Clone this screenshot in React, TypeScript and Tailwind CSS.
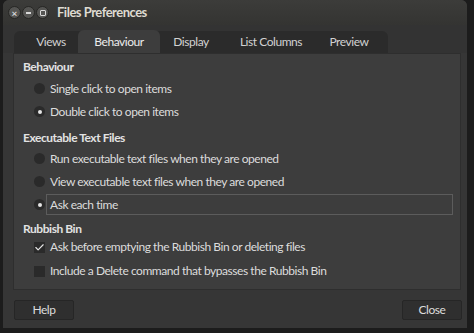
import { Check } from "lucide-react";

function Radio({ checked }: { checked?: boolean }) {
  return (
    <span className="w-[11px] h-[11px] rounded-full bg-[#2a2a2a] flex items-center justify-center shrink-0">
      {checked && <span className="w-[4px] h-[4px] rounded-full bg-[#e6e6e6]" />}
    </span>
  );
}

function Box({ checked }: { checked?: boolean }) {
  return (
    <span className="w-[11px] h-[11px] bg-[#2a2a2a] flex items-center justify-center shrink-0">
      {checked && <Check className="w-[11px] h-[11px] text-[#e6e6e6]" strokeWidth={2.5} />}
    </span>
  );
}

function Row({
  children,
  control,
  focus,
  h = "h-[23px]",
}: {
  children: string;
  control: React.ReactNode;
  focus?: boolean;
  h?: string;
}) {
  return (
    <div className={"flex items-center pl-[20px] pr-[7px] " + h}>
      {control}
      <div
        className={
          "ml-[1px] flex-1 h-[21px] flex items-center pl-[3px] " +
          (focus ? "border border-[#5c5c5c]" : "border border-transparent")
        }
      >
        {children}
      </div>
    </div>
  );
}

function Heading({ children, h = "h-[18px]" }: { children: string; h?: string }) {
  return <div className={"font-bold flex items-center pl-[9px] text-[#e2e2e2] " + h}>{children}</div>;
}

const tabs = ["Views", "Behaviour", "Display", "List Columns", "Preview"];
const tabW = [74, 62, 82, 78, 78];

export default function App() {
  return (
    <div
      className="w-[474px] h-[333px] bg-[#1c1c1c] text-[#dcdcdc] text-[12px] tracking-[-0.45px] overflow-hidden"
      style={{ fontFamily: "Lato, 'Open Sans', sans-serif" }}
    >
      <div className="ml-[3px] w-[464px] h-[328px] bg-[#363636] rounded-t-[6px] flex flex-col">
        {/* title bar */}
        <div className="h-[25px] rounded-t-[6px] bg-gradient-to-b from-[#3c3c3a] to-[#343432] flex items-center pl-[5px]">
          <div className="flex gap-[1px]">
            <span className="w-[13px] h-[13px] rounded-full bg-[#555553] border border-[#262624] flex items-center justify-center text-[10px] leading-none text-[#d8d8d8] font-bold tracking-normal">×</span>
            <span className="w-[13px] h-[13px] rounded-full bg-[#555553] border border-[#262624] flex items-center justify-center">
              <span className="w-[5px] h-[2px] bg-[#d8d8d8]" />
            </span>
            <span className="w-[13px] h-[13px] rounded-full bg-[#555553] border border-[#262624] flex items-center justify-center">
              <span className="w-[6px] h-[6px] border border-[#d8d8d8] rounded-[1px]" />
            </span>
          </div>
          <span className="ml-[8px] font-bold text-[13px] tracking-[-0.5px] text-[#dfdbd2]">Files Preferences</span>
        </div>

        {/* tabs */}
        <div className="flex items-end h-[28px] pl-[11px] bg-[#333333]">
          <div className="flex items-end h-[22px] bg-[#2b2b2b] rounded-tl-[6px] rounded-tr-[6px]">
            {tabs.map((t, i) => (
              <div
                key={t}
                className={
                  "h-[22px] flex items-center justify-center " +
                  (i === 1
                    ? "relative z-10 -mx-[10px] h-[23px] bg-[#3d3d3d] text-[#ececec] rounded-t-[6px]"
                    : "text-[#d2d2d2]")
                }
                style={{ width: i === 1 ? tabW[i] + 20 : tabW[i] }}
              >
                {t}
              </div>
            ))}
          </div>
        </div>

        {/* panel */}
        <div className="ml-[10px] mr-[6px] h-[237px] bg-[#3d3d3d] border border-[#2e2e2e] pt-[4px]">
          <Heading>Behaviour</Heading>
          <div className="h-[1px]" />
          <Row control={<Radio />}>Single click to open items</Row>
          <Row control={<Radio checked />}>Double click to open items</Row>
          <div className="h-[6px]" />
          <Heading>Executable Text Files</Heading>
          <Row control={<Radio />}>Run executable text files when they are opened</Row>
          <Row control={<Radio />}>View executable text files when they are opened</Row>
          <Row control={<Radio checked />} focus>Ask each time</Row>
          <div className="h-[5px]" />
          <Heading h="h-[16px]">Rubbish Bin</Heading>
          <Row control={<Box checked />} h="h-[20px]">Ask before emptying the Rubbish Bin or deleting files</Row>
          <div className="h-[4px]" />
          <Row control={<Box />} h="h-[20px]">Include a Delete command that bypasses the Rubbish Bin</Row>
        </div>

        {/* buttons */}
        <div className="flex justify-between pl-[11px] pr-[5px] mt-[10px]">
          <button className="w-[60px] h-[20px] bg-[#2f2f2f] border border-[#262626] rounded-[2px] text-[#dcdcdc]">Help</button>
          <button className="w-[60px] h-[20px] bg-[#2f2f2f] border border-[#262626] rounded-[2px] text-[#dcdcdc]">Close</button>
        </div>
      </div>
    </div>
  );
}
